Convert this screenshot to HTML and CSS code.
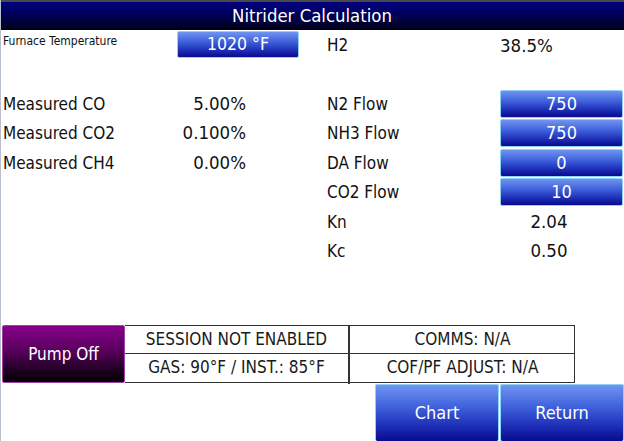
FILE: index.html
```html
<!DOCTYPE html>
<html>
<head>
<meta charset="utf-8">
<title>Nitrider Calculation</title>
<link rel="stylesheet" href="styles.css">
</head>
<body>
<div class="screen">
  <header class="title">Nitrider Calculation</header>
  <div class="grid top">
    <div class="lbl small">Furnace Temperature</div>
    <div class="btn temp">1020 °F</div>
    <div class="lbl r">H2</div>
    <div class="val h2">38.5%</div>
  </div>
  <div class="grid rows">
    <div class="lbl">Measured CO</div>
    <div class="val lv">5.00%</div>
    <div class="lbl r">N2 Flow</div>
    <div class="btn flow">750</div>

    <div class="lbl">Measured CO2</div>
    <div class="val lv">0.100%</div>
    <div class="lbl r">NH3 Flow</div>
    <div class="btn flow">750</div>

    <div class="lbl">Measured CH4</div>
    <div class="val lv">0.00%</div>
    <div class="lbl r">DA Flow</div>
    <div class="btn flow">0</div>

    <div class="lbl r">CO2 Flow</div>
    <div class="btn flow">10</div>

    <div class="lbl r">Kn</div>
    <div class="val k">2.04</div>

    <div class="lbl r">Kc</div>
    <div class="val k">0.50</div>
  </div>
  <div class="spacer"></div>
  <footer class="footer">
    <div class="status-row">
      <div class="btn pump">Pump Off</div>
      <div class="status">
        <div class="cell">SESSION NOT ENABLED</div>
        <div class="cell">COMMS: N/A</div>
        <div class="cell">GAS: 90°F / INST.: 85°F</div>
        <div class="cell">COF/PF ADJUST: N/A</div>
      </div>
    </div>
    <div class="nav-row">
      <div class="btn nav">Chart</div>
      <div class="btn nav">Return</div>
    </div>
  </footer>
</div>
</body>
</html>
```
FILE: styles.css
```css
html, body {
  margin: 0;
  padding: 0;
  background: #ffffff;
}
body {
  font-family: "DejaVu Sans Condensed", "DejaVu Sans", sans-serif;
  color: #111111;
}
.screen {
  width: 624px;
  height: 441px;
  display: flex;
  flex-direction: column;
  overflow: hidden;
  box-sizing: border-box;
  border-left: 1px solid #b8c0cc;
}
.title {
  height: 28px;
  border-top: 2px solid #4a4a4a;
  background: linear-gradient(to bottom, #000080 0%, #00005a 45%, #000014 100%);
  color: #ffffff;
  font-size: 18.4px;
  line-height: 28px;
  text-align: center;
  flex: none;
  margin-left: -1px;
}
.grid {
  display: grid;
  grid-template-columns: 174px 122px 28px 173px 123px;
  padding-left: 2px;
  flex: none;
}
.grid.top {
  grid-template-rows: 27px;
  margin-top: 1px;
}
.grid.rows {
  grid-auto-rows: 28px;
  row-gap: 1.5px;
  margin-top: 31.5px;
}
.lbl {
  grid-column: 1;
  font-size: 17px;
  line-height: 28px;
  white-space: nowrap;
}
.lbl.small {
  font-size: 12px;
  line-height: 18px;
  padding-top: 1px;
}
.lbl.r {
  grid-column: 4;
}
.val {
  font-size: 18.5px;
  line-height: 28px;
  white-space: nowrap;
}
.val.lv {
  grid-column: 2;
  text-align: right;
  padding-right: 53px;
}
.val.h2 {
  grid-column: 5;
  padding-top: 1px;
}
.val.k {
  grid-column: 5;
  text-align: center;
  padding-right: 25px;
}
.btn {
  box-sizing: border-box;
  color: #ffffff;
  text-align: center;
  white-space: nowrap;
}
.temp,
.flow,
.nav {
  border: 1px solid #8ed2f6;
  border-radius: 2px;
  background: linear-gradient(to bottom, #7094f0 0%, #3e60dc 40%, #1c2cb4 75%, #0a0a8c 100%);
}
.temp {
  height: 27px;
  font-size: 17.5px;
  line-height: 25px;
  grid-column: 2;
}
.flow {
  height: 28px;
  font-size: 18px;
  line-height: 26px;
  grid-column: 5;
}
.spacer {
  flex: 1;
}
.footer {
  flex: none;
  display: flex;
  flex-direction: column;
}
.status-row {
  display: flex;
  height: 58px;
  padding-left: 1px;
}
.pump {
  width: 123px;
  height: 58px;
  border: 1px solid #a040a8;
  border-radius: 2px;
  background: linear-gradient(to bottom, #86008a 0%, #58005c 45%, #1e0020 80%, #050005 100%);
  font-size: 17px;
  line-height: 56px;
}
.status {
  width: 450px;
  display: grid;
  grid-template-columns: 225px 225px;
  grid-template-rows: 28px 30px;
  box-sizing: border-box;
  border: 1px solid #333333;
  border-left: none;
}
.cell {
  font-size: 17px;
  line-height: 27px;
  text-align: center;
  color: #1a1a1a;
  box-sizing: border-box;
  white-space: nowrap;
}
.cell:nth-child(odd) {
  border-right: 2px solid #333333;
}
.cell:nth-child(1),
.cell:nth-child(2) {
  border-bottom: 1px solid #333333;
}
.nav-row {
  display: flex;
  justify-content: flex-end;
  gap: 1px;
  margin-top: 1px;
  height: 57px;
}
.nav {
  width: 124px;
  height: 57px;
  font-size: 18px;
  line-height: 55px;
  border-bottom: none;
}
```
